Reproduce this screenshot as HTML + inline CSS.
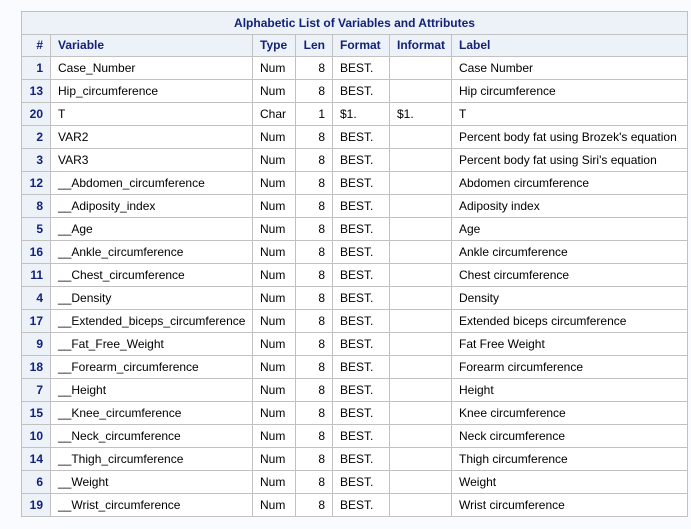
<!DOCTYPE html><html><head><style>
body{margin:0;background:#fafbfe;font-family:"Liberation Sans",sans-serif;font-size:12px;}
table{position:absolute;left:21px;top:11px;border-collapse:collapse;background:#fff;width:666px;table-layout:fixed}
td,th{border:1px solid #c1c1c1;height:22px;padding:0 7px;white-space:nowrap;overflow:hidden;line-height:22px}
th{background:#edf2f9;color:#112277;font-weight:bold;text-align:left}
tr.h th{height:21px;line-height:21px}
td.n{background:#edf2f9;color:#112277;font-weight:bold;text-align:right}
.r{text-align:right}
td{color:#000}
</style></head><body>
<table>
<colgroup><col style="width:29px"><col style="width:202px"><col style="width:43px"><col style="width:37px"><col style="width:57px"><col style="width:62px"><col style="width:236px"></colgroup>
<tr><th colspan="7" style="text-align:center">Alphabetic List of Variables and Attributes</th></tr>
<tr class="h"><th class="r">#</th><th>Variable</th><th>Type</th><th class="r">Len</th><th>Format</th><th>Informat</th><th>Label</th></tr>
<tr><td class="n">1</td><td>Case_Number</td><td>Num</td><td class="r">8</td><td>BEST.</td><td></td><td>Case Number</td></tr>
<tr><td class="n">13</td><td>Hip_circumference</td><td>Num</td><td class="r">8</td><td>BEST.</td><td></td><td>Hip circumference</td></tr>
<tr><td class="n">20</td><td>T</td><td>Char</td><td class="r">1</td><td>$1.</td><td>$1.</td><td>T</td></tr>
<tr><td class="n">2</td><td>VAR2</td><td>Num</td><td class="r">8</td><td>BEST.</td><td></td><td>Percent body fat using Brozek's equation</td></tr>
<tr><td class="n">3</td><td>VAR3</td><td>Num</td><td class="r">8</td><td>BEST.</td><td></td><td>Percent body fat using Siri's equation</td></tr>
<tr><td class="n">12</td><td>__Abdomen_circumference</td><td>Num</td><td class="r">8</td><td>BEST.</td><td></td><td>Abdomen circumference</td></tr>
<tr><td class="n">8</td><td>__Adiposity_index</td><td>Num</td><td class="r">8</td><td>BEST.</td><td></td><td>Adiposity index</td></tr>
<tr><td class="n">5</td><td>__Age</td><td>Num</td><td class="r">8</td><td>BEST.</td><td></td><td>Age</td></tr>
<tr><td class="n">16</td><td>__Ankle_circumference</td><td>Num</td><td class="r">8</td><td>BEST.</td><td></td><td>Ankle circumference</td></tr>
<tr><td class="n">11</td><td>__Chest_circumference</td><td>Num</td><td class="r">8</td><td>BEST.</td><td></td><td>Chest circumference</td></tr>
<tr><td class="n">4</td><td>__Density</td><td>Num</td><td class="r">8</td><td>BEST.</td><td></td><td>Density</td></tr>
<tr><td class="n">17</td><td>__Extended_biceps_circumference</td><td>Num</td><td class="r">8</td><td>BEST.</td><td></td><td>Extended biceps circumference</td></tr>
<tr><td class="n">9</td><td>__Fat_Free_Weight</td><td>Num</td><td class="r">8</td><td>BEST.</td><td></td><td>Fat Free Weight</td></tr>
<tr><td class="n">18</td><td>__Forearm_circumference</td><td>Num</td><td class="r">8</td><td>BEST.</td><td></td><td>Forearm circumference</td></tr>
<tr><td class="n">7</td><td>__Height</td><td>Num</td><td class="r">8</td><td>BEST.</td><td></td><td>Height</td></tr>
<tr><td class="n">15</td><td>__Knee_circumference</td><td>Num</td><td class="r">8</td><td>BEST.</td><td></td><td>Knee circumference</td></tr>
<tr><td class="n">10</td><td>__Neck_circumference</td><td>Num</td><td class="r">8</td><td>BEST.</td><td></td><td>Neck circumference</td></tr>
<tr><td class="n">14</td><td>__Thigh_circumference</td><td>Num</td><td class="r">8</td><td>BEST.</td><td></td><td>Thigh circumference</td></tr>
<tr><td class="n">6</td><td>__Weight</td><td>Num</td><td class="r">8</td><td>BEST.</td><td></td><td>Weight</td></tr>
<tr><td class="n">19</td><td>__Wrist_circumference</td><td>Num</td><td class="r">8</td><td>BEST.</td><td></td><td>Wrist circumference</td></tr>
</table>
</body></html>
